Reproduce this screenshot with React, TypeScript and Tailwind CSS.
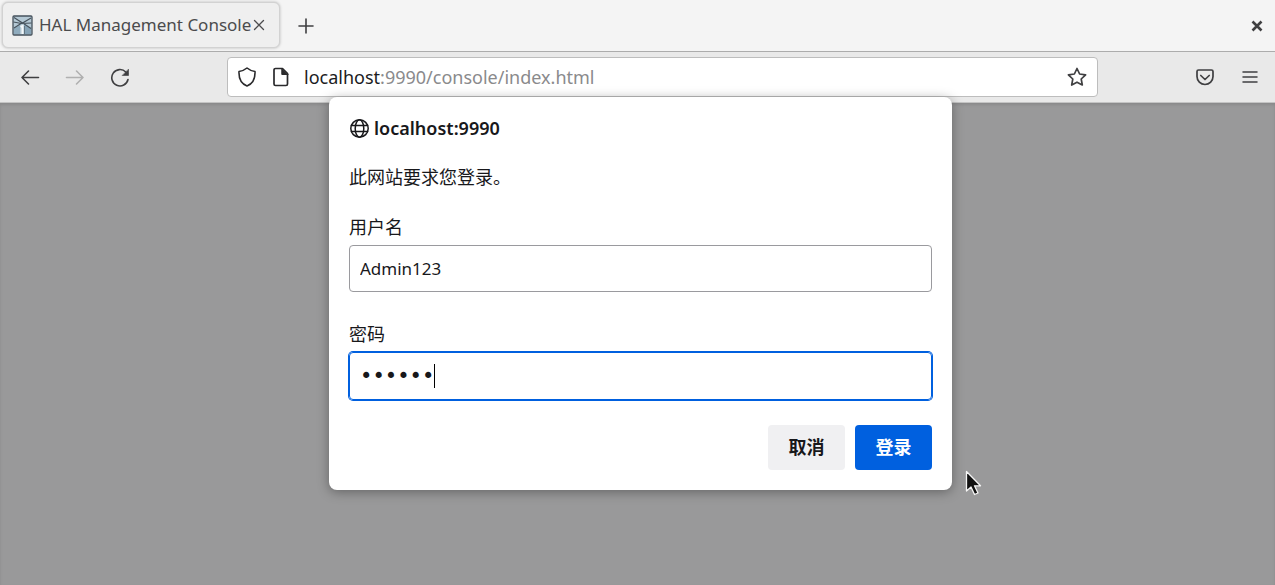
import type { ReactNode } from "react";

interface IconButtonProps {
  label: string;
  disabled?: boolean;
  children: ReactNode;
}

function IconButton({ label, disabled, children }: IconButtonProps) {
  return (
    <button
      type="button"
      aria-label={label}
      disabled={disabled}
      className="flex h-6 w-6 items-center justify-center text-[#3f3f41] disabled:text-[#b0b0b0]"
    >
      {children}
    </button>
  );
}

const stroke = {
  fill: "none",
  stroke: "currentColor",
  strokeLinecap: "round",
  strokeLinejoin: "round",
} as const;

function TabStrip() {
  return (
    <header className="flex h-[51px] items-start bg-[#f4f4f4]">
      <div className="mt-0.5 ml-0.5 flex h-[46px] w-[278px] items-center rounded-md border border-[#d2d2d2] bg-[#efefef] pl-[9px] text-[#4b4b4d] shadow-[0_0_3px_rgba(0,0,0,0.25)]">
        <svg width="21" height="21" viewBox="0 0 21 21" className="shrink-0">
          <rect x="1" y="1" width="19" height="19" rx="1" fill="#b4c8d4" stroke="#46525c" strokeWidth="1.3" />
          <path d="M2 13l6-3v9H2z" fill="#8fabbd" />
          <path d="M12 9l7 4v6h-7z" fill="#86a3b6" />
          <path d="M2 2.500l8.500 5.500L19 3M2 13l7-4.500M11.500 8.500l7.500 5M1.500 7l8 1.500 10-.5" fill="none" stroke="#46525c" strokeWidth="1.1" />
          <path d="M8 11l3.500-1.500V19H9.500v-6z" fill="#f4f8fa" />
          <path d="M12.500 11v8" stroke="#5d6f7c" strokeWidth="0.9" />
        </svg>
        <span className="ml-1.5 whitespace-nowrap text-[17px]">HAL Management Console</span>
        <button type="button" aria-label="关闭标签页" className="ml-0.5">
          <svg width="12" height="12" viewBox="0 0 12 12" {...stroke} strokeWidth="1.3">
            <path d="M1.500 1.500l9 9M10.500 1.500l-9 9" />
          </svg>
        </button>
      </div>
      <div className="ml-3.5 flex h-[51px] flex-1 items-center justify-between pr-1.5">
        <IconButton label="新建标签页">
          <svg width="16" height="16" viewBox="0 0 16 16" {...stroke} strokeWidth="1.6">
            <path d="M8 1v14M1 8h14" />
          </svg>
        </IconButton>
        <IconButton label="关闭窗口">
          <svg width="12" height="12" viewBox="0 0 12 12" {...stroke} strokeLinecap="butt" strokeWidth="2.6">
            <path d="M1.500 1.500l9 9M10.500 1.500l-9 9" />
          </svg>
        </IconButton>
      </div>
    </header>
  );
}

function Toolbar() {
  return (
    <nav className="flex h-[52px] items-center border-t border-b border-t-[#acacac] border-b-[#c4c4c4] bg-[#e9e9e9]">
      <div className="flex w-[227px] shrink-0 gap-[21px] pl-[18px]">
        <IconButton label="后退">
          <svg width="20" height="20" viewBox="0 0 20 20" {...stroke} strokeWidth="1.6">
            <path d="M18.500 10.500H2M8.500 4L2 10.500 8.500 17" />
          </svg>
        </IconButton>
        <IconButton label="前进" disabled>
          <svg width="20" height="20" viewBox="0 0 20 20" {...stroke} strokeWidth="1.6">
            <path d="M1.500 10.500H18M11.500 4l6.500 6.500-6.500 6.500" />
          </svg>
        </IconButton>
        <IconButton label="刷新">
          <svg width="20" height="20" viewBox="0 0 20 20" {...stroke} strokeWidth="1.6">
            <path d="M18 12.500A8.200 8.200 0 1 1 15.800 5L17.500 6.700" />
            <path d="M18.500 2.500v6h-6z" fill="currentColor" strokeWidth="0.6" />
          </svg>
        </IconButton>
      </div>

      <div className="flex h-10 flex-1 items-center rounded border border-[#bdbdbd] bg-white px-2 text-[#2a2a2c]">
        <svg width="22" height="22" viewBox="0 0 22 22" {...stroke} strokeWidth="1.6">
          <path d="M11 2c2.400 2 4.800 3 8 3.500.3 6.500-2.300 12.200-8 14.500C5.300 17.700 2.700 12 3 5.500 6.200 5 8.600 4 11 2z" />
        </svg>
        <svg width="22" height="22" viewBox="0 0 22 22" className="ml-3" {...stroke} strokeWidth="1.7">
          <path d="M5.500 2.500h7l5 5v10.500a1.500 1.500 0 0 1-1.500 1.500H5.500A1.500 1.500 0 0 1 4 18V4a1.500 1.500 0 0 1 1.500-1.500z" />
          <path d="M11.800 2.500v6h6z" fill="currentColor" strokeWidth="1" />
        </svg>
        <a href="#" className="ml-3 flex-1 whitespace-nowrap text-lg text-[#8a8a8c]">
          <span className="text-[#1c1c1e]">localhost</span>:9990/console/index.html
        </a>
        <IconButton label="收藏">
          <svg width="22" height="22" viewBox="0 0 22 22" {...stroke} strokeWidth="1.7">
            <path d="M11 2.500l2.600 5.500 6 .8-4.400 4.200 1.100 6L11 16.200 5.700 19l1.100-6L2.400 8.800l6-.8z" />
          </svg>
        </IconButton>
      </div>

      <div className="flex w-[177px] shrink-0 justify-end gap-[21px] pr-[13px]">
        <IconButton label="Pocket">
          <svg width="20" height="20" viewBox="0 0 20 20" {...stroke} strokeWidth="1.7">
            <path d="M3.500 3h13A1.500 1.500 0 0 1 18 4.500V9.500a8 8 0 0 1-16 0V4.500A1.500 1.500 0 0 1 3.500 3z" />
            <path d="M5.800 8.500l4.200 4 4.200-4" />
          </svg>
        </IconButton>
        <IconButton label="菜单">
          <svg width="16" height="16" viewBox="0 0 16 16" {...stroke} strokeWidth="1.500">
            <path d="M1 3h14M1 8h14M1 13h14" />
          </svg>
        </IconButton>
      </div>
    </nav>
  );
}

function LoginDialog() {
  return (
    <form
      role="dialog"
      aria-labelledby="origin"
      onSubmit={(e) => e.preventDefault()}
      className="w-[623px] rounded-lg bg-white px-5 pt-[18px] pb-5 text-lg text-[#18181b] shadow-[0_2px_12px_rgba(0,0,0,0.35)]"
    >
      <h1 id="origin" className="flex h-[26px] items-center gap-1 font-semibold">
        <svg width="21" height="21" viewBox="0 0 21 21" {...stroke} strokeWidth="1.500">
          <circle cx="10.500" cy="10.500" r="8.700" />
          <ellipse cx="10.500" cy="10.500" rx="4.300" ry="8.700" />
          <path d="M2.500 7.500h16M2.500 13.500h16" />
        </svg>
        localhost:9990
      </h1>
      <p className="mt-6 leading-6">此网站要求您登录。</p>

      <label htmlFor="username" className="mt-[26px] block leading-6">
        用户名
      </label>
      <input
        id="username"
        type="text"
        defaultValue="Admin123"
        className="mt-1.5 block h-[47px] w-full rounded border border-[#9a9a9e] px-2.5 text-[17px] outline-none"
      />

      <label htmlFor="password" className="mt-[30px] block leading-6">
        密码
      </label>
      <div className="relative mt-1.5 h-12">
        <input
          id="password"
          type="password"
          defaultValue="123456"
          className="block h-full w-full rounded border border-[#0060df] px-2.5 font-['DejaVu_Sans',sans-serif] text-[21px] caret-transparent ring-1 ring-[#0060df] outline-none"
        />
        <span className="absolute top-3 left-[85px] h-6 w-px bg-black" />
      </div>

      <div className="mt-[25px] flex justify-end gap-2.5 font-bold">
        <button type="button" className="h-[45px] w-[77px] rounded bg-[#f0f0f2] pb-0.5">
          取消
        </button>
        <button type="submit" className="h-[45px] w-[77px] rounded bg-[#0060df] pb-0.5 text-white">
          登录
        </button>
      </div>
    </form>
  );
}

export default function App() {
  return (
    <div className="relative flex min-h-screen flex-col overflow-hidden font-['Noto_Sans','Noto_Sans_CJK_SC',sans-serif]">
      <TabStrip />
      <Toolbar />
      <main className="flex-1 bg-[#99999a] shadow-[inset_0_2px_3px_rgba(0,0,0,0.1)]" />
      <div className="absolute inset-x-0 top-[97px] flex justify-center pl-1.5">
        <LoginDialog />
      </div>
      <svg width="18" height="26" viewBox="0 0 18 26" className="absolute top-[470px] left-[965px]">
        <path
          d="M1.500 1.500v19.500l4.500-4 3.500 7.500 3.500-1.500-3.500-7.200h6z"
          fill="#111"
          stroke="#f5f5f5"
          strokeWidth="1.300"
          strokeLinejoin="round"
        />
      </svg>
    </div>
  );
}
